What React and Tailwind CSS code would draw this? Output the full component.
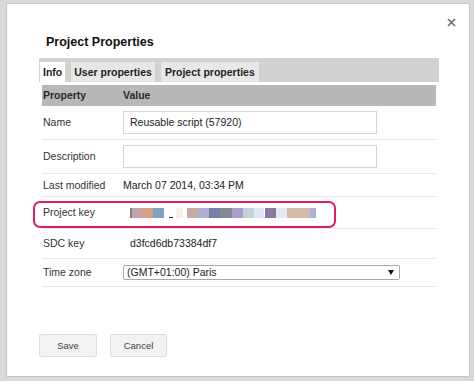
import React from "react";

const keyBlocks = [
  [2, "#8a7e85"],
  [10, "#c3a3aa"],
  [11, "#d4a082"],
  [11, "#7fa2c2"],
  [5, "transparent"],
  [4, "underscore"],
  [3, "transparent"],
  [7, "#f5efe8"],
  [4, "transparent"],
  [11, "#c9a9a5"],
  [11, "#adb0d0"],
  [11, "#757ea5"],
  [12, "#828a8f"],
  [11, "#a89fd0"],
  [11, "#c3d2d6"],
  [10, "#dce9f3"],
  [1, "transparent"],
  [11, "#8a7aa0"],
  [11, "#e2ebf3"],
  [23, "#d3bba8"],
  [6, "#b0b0dc"],
];

function Row({ label, h, children }) {
  return (
    <div className={`flex items-center border-b border-[#e2e8ee] ${h}`}>
      <div className="w-[81px] pl-[1px] text-[#333]">{label}</div>
      <div className="flex-1 flex items-center">{children}</div>
    </div>
  );
}

export default function App() {
  return (
    <div
      className="w-[474px] h-[381px] bg-[#d9d9d9] pt-[3px] pl-[6px] overflow-hidden"
      style={{ fontFamily: '"Liberation Sans", Arial, sans-serif' }}
    >
      <div className="relative w-[464px] h-[374px] bg-white border border-[#c4c4c4] flex flex-col text-[10.5px] leading-[13px]">
        {/* close */}
        <svg
          className="absolute left-[440px] top-[14px] w-[9px] h-[9px]"
          viewBox="0 0 9 9"
        >
          <path d="M1 1 L8 8 M8 1 L1 8" stroke="#6e6e6e" strokeWidth="1.7" />
        </svg>

        {/* annotation box */}
        <div className="absolute left-[26px] top-[197px] w-[303px] h-[27px] border-2 border-[#dc1f5c] rounded-[7px]" />

        <div className="pt-[31px] pl-[39px] text-[12.5px] leading-[15px] font-bold text-[#111]">
          Project Properties
        </div>

        <div className="ml-[32px] mt-[8px] w-[400px]">
          <div className="h-[24px] bg-[#d1d1d1] flex items-end gap-[6px] pl-[1px] font-bold text-[#222]">
            <div className="h-[20px] px-[3px] bg-white flex items-center">Info</div>
            <div className="h-[20px] px-[3px] bg-[#e7e7e7] flex items-center">User properties</div>
            <div className="h-[20px] px-[4px] bg-[#e7e7e7] flex items-center">Project properties</div>
          </div>

          <div className="mx-[3px] mt-[3px]">
            <div className="h-[21px] bg-[#b8b8b8] flex items-center font-bold text-[#2a2a2a]">
              <div className="w-[81px] pl-[1px]">Property</div>
              <div>Value</div>
            </div>

            <Row label="Name" h="h-[34px]">
              <div className="w-[254px] h-[23px] border border-[#d4d4d4] flex items-center pl-[6px] text-[#222]">
                Reusable script (57920)
              </div>
            </Row>
            <Row label="Description" h="h-[34px]">
              <div className="w-[254px] h-[23px] border border-[#d4d4d4]" />
            </Row>
            <Row label="Last modified" h="h-[23px]">
              <span className="text-[#222]">March 07 2014, 03:34 PM</span>
            </Row>
            <Row label="Project key" h="h-[32px]">
              <div className="flex h-[10px] ml-[7px]">
                {keyBlocks.map(([w, c], i) =>
                  c === "underscore" ? (
                    <div key={i} className="h-full flex items-end" style={{ width: w }}>
                      <div className="w-full h-[1px] bg-[#333]" />
                    </div>
                  ) : (
                    <div key={i} className="h-full" style={{ width: w, background: c }} />
                  )
                )}
              </div>
            </Row>
            <Row label="SDC key" h="h-[30px]">
              <span className="ml-[7px] text-[#222]">d3fcd6db73384df7</span>
            </Row>
            <Row label="Time zone" h="h-[28px]">
              <div className="w-[277px] h-[15px] border border-[#a8a8a8] rounded-[2px] flex items-center justify-between pl-[3px] pr-[5px] text-[#222]">
                <span>(GMT+01:00) Paris</span>
                <svg className="w-[6px] h-[5px]" viewBox="0 0 6 5">
                  <path d="M0 0 L6 0 L3 5 Z" fill="#111" />
                </svg>
              </div>
            </Row>
          </div>
        </div>

        <div className="ml-[32px] mt-[47px] flex gap-[13px] text-[9.5px] text-[#444]">
          <div className="w-[58px] h-[23px] bg-[#f2f2f2] border border-[#dcdcdc] rounded-[2px] flex items-center justify-center">
            Save
          </div>
          <div className="w-[57px] h-[23px] bg-[#f2f2f2] border border-[#dcdcdc] rounded-[2px] flex items-center justify-center">
            Cancel
          </div>
        </div>
      </div>
    </div>
  );
}
